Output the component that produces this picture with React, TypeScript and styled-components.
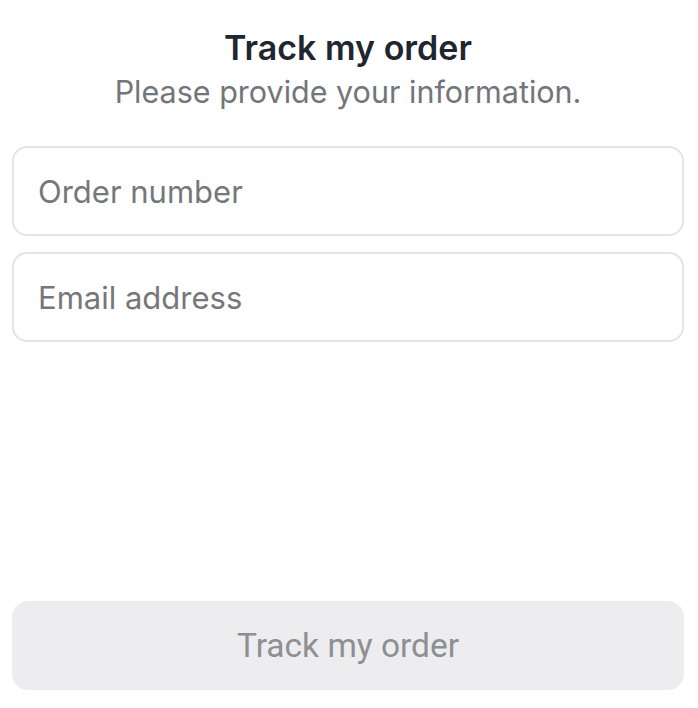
import styled, { createGlobalStyle } from 'styled-components';

const GlobalStyle = createGlobalStyle`
  html, body {
    margin: 0;
    padding: 0;
    background: #ffffff;
  }
  body {
    font-family: Inter, "Noto Sans", sans-serif;
  }
`;

const Page = styled.div`
  height: 708px;
  box-sizing: border-box;
  padding: 26px 14px 18px 12px;
  display: flex;
  flex-direction: column;
`;

const Header = styled.div`
  display: flex;
  flex-direction: column;
  align-items: center;
  margin-bottom: 32px;
`;

const Title = styled.h1`
  margin: 0;
  font-size: 34px;
  line-height: 44px;
  font-weight: 600;
  color: #1f2630;
`;

const Subtitle = styled.p`
  margin: 0;
  font-size: 30.5px;
  line-height: 44px;
  font-weight: 400;
  color: #72767c;
`;

const Fields = styled.div`
  display: flex;
  flex-direction: column;
  gap: 16px;
`;

const Field = styled.input`
  height: 90px;
  box-sizing: border-box;
  border: 2px solid #e4e4e6;
  border-radius: 15px;
  padding: 0 24px;
  font-family: Inter, "Noto Sans", sans-serif;
  font-size: 31px;
  color: #1f2630;
  outline: none;
  &::placeholder {
    color: #76777a;
  }
`;

const Spacer = styled.div`
  flex: 1;
`;

const SubmitButton = styled.button`
  height: 89px;
  border: 0;
  border-radius: 16px;
  background: #ededef;
  color: #8d8f93;
  font-family: Roboto, "Noto Sans", sans-serif;
  font-size: 33.5px;
  cursor: default;
`;

export default function App() {
  return (
    <>
      <GlobalStyle />
      <Page>
        <Header>
          <Title>Track my order</Title>
          <Subtitle>Please provide your information.</Subtitle>
        </Header>
        <Fields>
          <Field placeholder="Order number" />
          <Field placeholder="Email address" />
        </Fields>
        <Spacer />
        <SubmitButton disabled>Track my order</SubmitButton>
      </Page>
    </>
  );
}
